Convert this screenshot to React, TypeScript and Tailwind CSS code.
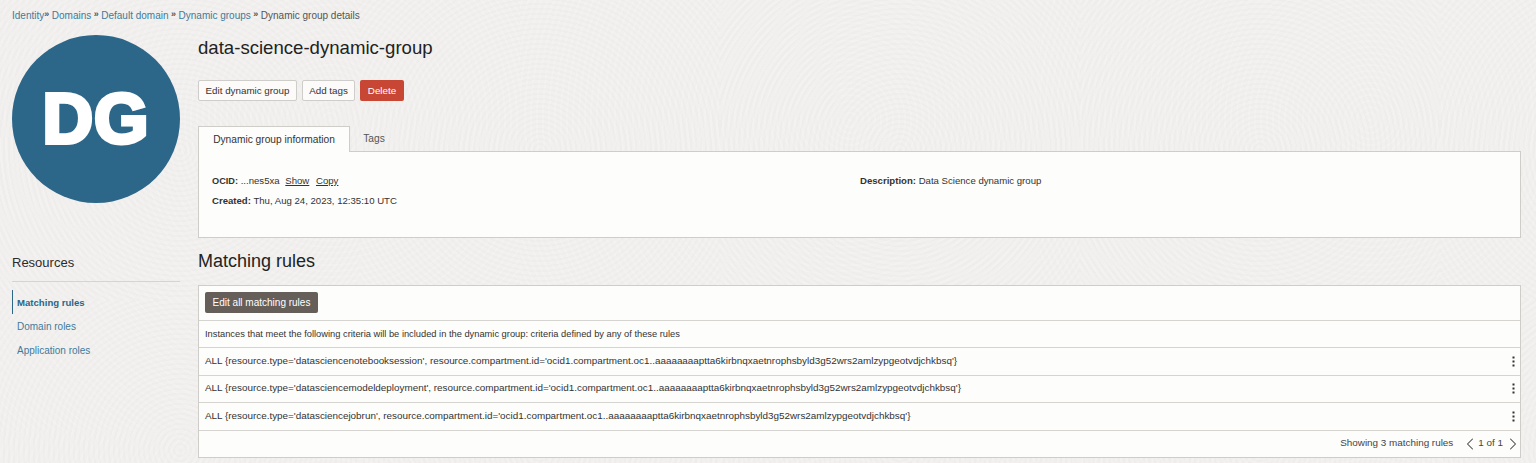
import { ChevronLeft, ChevronRight } from "lucide-react";

const rules = [
  "ALL {resource.type='datasciencenotebooksession', resource.compartment.id='ocid1.compartment.oc1..aaaaaaaaptta6kirbnqxaetnrophsbyld3g52wrs2amlzypgeotvdjchkbsq'}",
  "ALL {resource.type='datasciencemodeldeployment', resource.compartment.id='ocid1.compartment.oc1..aaaaaaaaptta6kirbnqxaetnrophsbyld3g52wrs2amlzypgeotvdjchkbsq'}",
  "ALL {resource.type='datasciencejobrun', resource.compartment.id='ocid1.compartment.oc1..aaaaaaaaptta6kirbnqxaetnrophsbyld3g52wrs2amlzypgeotvdjchkbsq'}",
];

function Sep() {
  return <span className="mx-[2.5px] text-[9px] font-bold text-[#555]">»</span>;
}

function Dots() {
  return (
    <svg width="3" height="11" viewBox="0 0 3 11" className="fill-[#333]">
      <rect x="0.5" y="0.5" width="2" height="2" />
      <rect x="0.5" y="4.5" width="2" height="2" />
      <rect x="0.5" y="8.5" width="2" height="2" />
    </svg>
  );
}

export default function App() {
  return (
    <main className="h-[463px] w-full overflow-hidden bg-[#f1f0ee] font-['Liberation_Sans',Arial,sans-serif] text-[#333] [background-image:repeating-radial-gradient(circle_at_180px_150px,rgba(0,0,0,0.01)_0,rgba(0,0,0,0.01)_2px,transparent_2px,transparent_5px),repeating-radial-gradient(circle_at_330px_120px,rgba(255,255,255,0.12)_0,rgba(255,255,255,0.12)_2px,transparent_2px,transparent_6px)] [background-size:360px_300px,520px_430px]">
      {/* breadcrumbs */}
      <div className="flex h-[30px] items-center pl-3 text-[10px]">
        <span className="-mr-[2.5px] text-[#3f7a9b]">Identity</span>
        <Sep />
        <span className="text-[#3f7a9b]">Domains</span>
        <Sep />
        <span className="text-[#3f7a9b]">Default domain</span>
        <Sep />
        <span className="text-[#3f7a9b]">Dynamic groups</span>
        <Sep />
        <span className="text-[#555]">Dynamic group details</span>
      </div>

      <div className="flex pl-3 pr-[15px]">
        {/* sidebar */}
        <aside className="mr-[18px] w-[168px] shrink-0">
          <div className="mt-[5px] flex h-[168px] w-[168px] items-center justify-center rounded-full bg-[#2c6689] text-[70px] font-bold tracking-[1px] text-white [-webkit-text-stroke:4px_white]">
            DG
          </div>
          <h3 className="mt-[51px] text-[13px] leading-[18px] text-[#2b2b2b]">Resources</h3>
          <div className="mt-[9px] h-px bg-[#d6d4d1]" />
          <nav className="mt-2 text-[10px]">
            <div className="flex h-6 items-center border-l border-[#2c6689] pl-[4px] pt-[2px] text-[9.6px] font-bold text-[#2c6689]">Matching rules</div>
            <div className="flex h-6 items-center pl-[5px] text-[#3f7a9b]">Domain roles</div>
            <div className="flex h-6 items-center pl-[5px] text-[#3f7a9b]">Application roles</div>
          </nav>
        </aside>

        {/* content */}
        <section className="min-w-0 flex-1">
          <h1 className="mt-[6px] text-[18.6px] leading-6 text-[#222]">data-science-dynamic-group</h1>
          <div className="mt-5 flex text-[9.8px]">
            <button className="mr-[5px] h-[21px] w-[99px] rounded-[2px] border border-[#cfcdca] bg-[#fcfbfa] pt-px text-[#333]">Edit dynamic group</button>
            <button className="mr-[5px] h-[21px] w-[53px] rounded-[2px] border border-[#cfcdca] bg-[#fcfbfa] pt-px text-[#333]">Add tags</button>
            <button className="h-[21px] w-[44px] rounded-[2px] bg-[#c74634] pt-px text-white">Delete</button>
          </div>

          {/* tabs */}
          <div className="mt-[25px] flex text-[10.2px]">
            <div className="relative z-10 -mb-px flex h-[26px] w-[152px] items-center justify-center border border-b-0 border-[#cfcdca] bg-[#fdfdfb]">Dynamic group information</div>
            <div className="flex h-[25px] w-[48px] items-center justify-center text-[#555]">Tags</div>
          </div>
          <div className="flex h-[87px] border border-[#cfcdca] bg-[#fdfdfb] pl-[13px] text-[9.6px]">
            <div className="w-[648px] pt-[22px]">
              <div className="leading-[14px]">
                <b className="text-[9.2px]">OCID:</b> ...nes5xa <span className="ml-[3px] underline">Show</span> <span className="ml-[4px] underline">Copy</span>
              </div>
              <div className="mt-[6px] leading-[14px]"><b>Created:</b> Thu, Aug 24, 2023, 12:35:10 UTC</div>
            </div>
            <div className="pt-[22px] leading-[14px]"><b>Description:</b> Data Science dynamic group</div>
          </div>

          <h2 className="mt-[11px] text-[18px] leading-6 text-[#222]">Matching rules</h2>

          {/* rules table */}
          <div className="mt-[12px] border border-[#cfcdca] bg-[#fdfdfb] text-[9.9px]">
            <div className="flex h-[35px] items-center border-b border-[#d6d4d1] px-[6px] pb-[2px]">
              <button className="h-[21px] w-[113px] rounded-[2px] bg-[#655e59] text-[10px] text-white">Edit all matching rules</button>
            </div>
            <div className="flex h-[27px] items-center border-b border-[#d6d4d1] px-[6px] pt-px text-[9.3px]">
              Instances that meet the following criteria will be included in the dynamic group: criteria defined by any of these rules
            </div>
            {rules.map((rule) => (
              <div key={rule} className="flex h-[27.5px] items-center justify-between border-b border-[#d6d4d1] pl-[6px] pr-[5px]">
                <span>{rule}</span>
                <Dots />
              </div>
            ))}
            <div className="flex h-[26px] items-center justify-end text-[#444]">
              <span>Showing 3 matching rules</span>
              <ChevronLeft className="ml-[7px] -mr-[3px] h-5 w-5" strokeWidth={1.25} />
              <span className="mx-[1px]">1 of 1</span>
              <ChevronRight className="-ml-[1px] -mr-[3px] h-5 w-5" strokeWidth={1.25} />
            </div>
          </div>
        </section>
      </div>
    </main>
  );
}
